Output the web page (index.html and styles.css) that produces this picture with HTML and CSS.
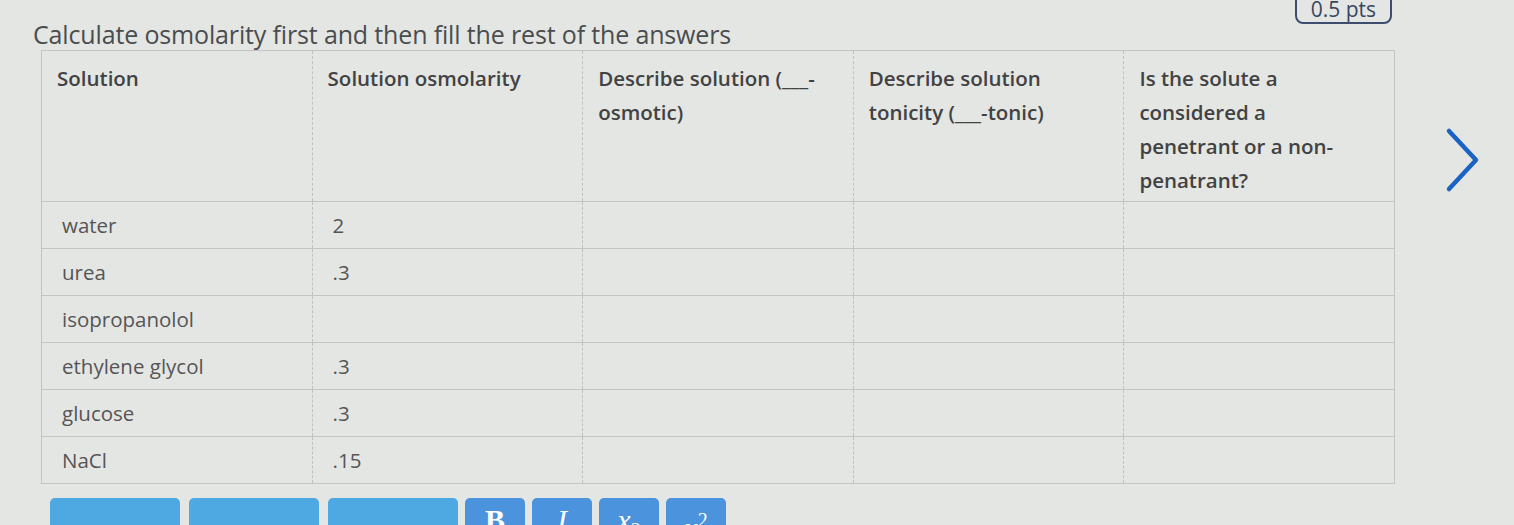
FILE: index.html
```html
<!DOCTYPE html>
<html>
<head>
<meta charset="utf-8">
<link rel="stylesheet" href="styles.css">
</head>
<body>
<div class="page">
  <div class="main">
    <div class="head">
      <div class="title">Calculate osmolarity first and then fill the rest of the answers</div>
      <div class="pts">0.5 pts</div>
    </div>
    <table class="grid">
      <thead>
        <tr>
          <th>Solution</th>
          <th>Solution osmolarity</th>
          <th>Describe solution (___-osmotic)</th>
          <th>Describe solution tonicity (___-tonic)</th>
          <th class="last">Is the solute a considered a penetrant or a non-penatrant?</th>
        </tr>
      </thead>
      <tbody>
        <tr><td>water</td><td>2</td><td></td><td></td><td></td></tr>
        <tr><td>urea</td><td>.3</td><td></td><td></td><td></td></tr>
        <tr><td>isopropanolol</td><td></td><td></td><td></td><td></td></tr>
        <tr><td>ethylene glycol</td><td>.3</td><td></td><td></td><td></td></tr>
        <tr><td>glucose</td><td>.3</td><td></td><td></td><td></td></tr>
        <tr><td>NaCl</td><td>.15</td><td></td><td></td><td></td></tr>
      </tbody>
    </table>
    <div class="toolbar">
      <div class="btn wide"></div>
      <div class="btn wide"></div>
      <div class="btn wide"></div>
      <div class="btn sq"><b>B</b></div>
      <div class="btn sq"><i>I</i></div>
      <div class="btn sq"><i>x</i><sub>2</sub></div>
      <div class="btn sq"><i>x</i><sup>2</sup></div>
    </div>
  </div>
  <div class="side">
    <svg class="chev" width="36" height="66" viewBox="0 0 36 66">
      <path d="M4 4 L31 33 L4 62" fill="none" stroke="#1a63c4" stroke-width="4.5" stroke-linecap="round" stroke-linejoin="round"/>
    </svg>
  </div>
</div>
</body>
</html>
```

FILE: styles.css
```css
html, body {
  margin: 0;
  padding: 0;
  background: #e4e6e4;
  overflow: hidden;
}
body {
  font-family: "Open Sans", "Liberation Sans", sans-serif;
  color: #4a4a4a;
  height: 525px;
}
.page {
  display: flex;
  padding-left: 41px;
}
.main {
  width: 1354px;
  display: flex;
  flex-direction: column;
}
.head {
  display: flex;
  justify-content: space-between;
  align-items: flex-start;
  height: 50px;
}
.title {
  margin-left: -8px;
  padding-top: 20px;
  font-size: 25px;
  line-height: 28px;
  color: #4a4d4e;
  letter-spacing: -0.15px;
}
.pts {
  margin-top: -6px;
  margin-right: 3px;
  border: 2px solid #3e4d6d;
  border-radius: 0 0 8px 8px;
  height: 26px;
  padding: 0 14px;
  font-size: 21px;
  line-height: 26px;
  color: #3a4660;
}
.grid {
  border-collapse: collapse;
  table-layout: fixed;
  width: 1354px;
  border: 1px solid #c3c5c4;
}
.grid th, .grid td {
  box-sizing: border-box;
  width: 20%;
  border-left: 1px dashed #bfc1c0;
  text-align: left;
}
.grid th:first-child, .grid td:first-child {
  border-left: none;
}
.grid th {
  vertical-align: top;
  padding: 10px 15px 4px 15px;
  font-size: 20.5px;
  font-weight: 600;
  line-height: 34px;
  color: #424242;
  height: 150px;
}
.grid th.last {
  padding-right: 44px;
}
.grid td {
  border-top: 1px solid #c3c5c4;
  height: 47px;
  padding: 0 20px;
  font-size: 20.5px;
  color: #555;
  vertical-align: middle;
}
.toolbar {
  display: flex;
  gap: 9px;
  margin-top: 14px;
  margin-left: 9px;
}
.btn {
  height: 40px;
  border-radius: 5px;
  color: #fff;
  font-family: "Liberation Serif", serif;
  font-size: 30px;
  text-align: center;
  line-height: 44px;
}
.wide {
  width: 130px;
  background: #4ea8e2;
}
.sq {
  width: 60px;
  background: #4b93dc;
  margin-left: -2px;
}
.sq sub, .sq sup {
  font-size: 20px;
}
.side {
  padding-left: 50px;
  padding-top: 127px;
}
.chev {
  display: block;
}
```
